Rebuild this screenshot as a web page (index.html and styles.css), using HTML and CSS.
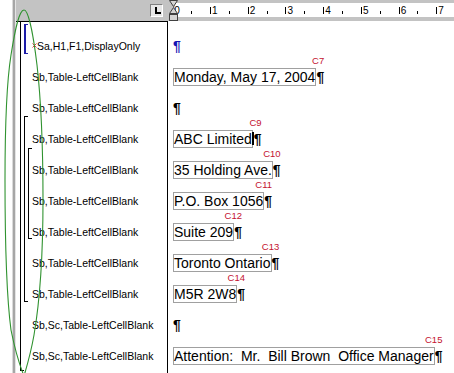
FILE: index.html
```html
<!DOCTYPE html>
<html lang="en">
<head>
    <meta charset="UTF-8">
    <title>Style Area</title>
    <link rel="stylesheet" href="styles.css">
</head>
<body>
<div class="window">
    <div class="gutter"></div>
    <div class="split-bar"></div>

    <div class="main">
        <!-- Ruler -->
        <div class="ruler">
            <div class="tab-btn"><span class="tab-l"></span></div>
            <svg class="indent-marker" viewBox="0 0 9 21">
                <path d="M0.5,0.5 H8.5 L4.5,6.5 Z" fill="#d4d4d4" stroke="#404040"/>
                <path d="M4.5,7.5 L8.5,13.5 H0.5 Z" fill="#d4d4d4" stroke="#404040"/>
                <rect x="0.5" y="14.5" width="8" height="6" fill="#d4d4d4" stroke="#404040"/>
            </svg>
            <div class="scale">
                <div class="inch"><div class="inch-a"><span class="tick"></span><span class="num">0</span></div><div class="inch-b"><span class="half"></span></div></div>
                <div class="inch"><div class="inch-a"><span class="tick"></span><span class="num">1</span></div><div class="inch-b"><span class="half"></span></div></div>
                <div class="inch"><div class="inch-a"><span class="tick"></span><span class="num">2</span></div><div class="inch-b"><span class="half"></span></div></div>
                <div class="inch"><div class="inch-a"><span class="tick"></span><span class="num">3</span></div><div class="inch-b"><span class="half"></span></div></div>
                <div class="inch"><div class="inch-a"><span class="tick"></span><span class="num">4</span></div><div class="inch-b"><span class="half"></span></div></div>
                <div class="inch"><div class="inch-a"><span class="tick"></span><span class="num">5</span></div><div class="inch-b"><span class="half"></span></div></div>
                <div class="inch"><div class="inch-a"><span class="tick"></span><span class="num">6</span></div><div class="inch-b"><span class="half"></span></div></div>
                <div class="inch"><div class="inch-a"><span class="tick"></span><span class="num">7</span></div><div class="inch-b"><span class="half"></span></div></div>
            </div>
        </div>

        <div class="content">
            <!-- Style names -->
            <div class="style-area">
                <div class="style-row">
                    <svg class="style-mark" viewBox="0 0 5 5"><path d="M0.5,0.5 L4.5,4.5 M4.5,0.5 L0.5,4.5" stroke="#e04040" stroke-width="1"/></svg>Sa,H1,F1,DisplayOnly
                </div>
                <div class="style-row">Sb,Table-LeftCellBlank</div>
                <div class="style-row">Sb,Table-LeftCellBlank</div>
                <div class="style-row">Sb,Table-LeftCellBlank</div>
                <div class="style-row">Sb,Table-LeftCellBlank</div>
                <div class="style-row">Sb,Table-LeftCellBlank</div>
                <div class="style-row">Sb,Table-LeftCellBlank</div>
                <div class="style-row">Sb,Table-LeftCellBlank</div>
                <div class="style-row">Sb,Table-LeftCellBlank</div>
                <div class="style-row">Sb,Sc,Table-LeftCellBlank</div>
                <div class="style-row">Sb,Sc,Table-LeftCellBlank</div>
            </div>

            <!-- Document text -->
            <div class="doc">
                <div class="para"><span class="pil pil-blue">¶</span></div>
                <div class="para"><span class="field"><span class="box">Monday, May 17, 2004</span><span class="pil">¶</span><span class="tag">C7</span></span></div>
                <div class="para"><span class="pil">¶</span></div>
                <div class="para"><span class="field"><span class="box">ABC Limited</span><span class="caret"></span><span class="pil">¶</span><span class="tag">C9</span></span></div>
                <div class="para"><span class="field"><span class="box">35 Holding Ave.</span><span class="pil">¶</span><span class="tag">C10</span></span></div>
                <div class="para"><span class="field"><span class="box">P.O. Box 1056</span><span class="pil">¶</span><span class="tag">C11</span></span></div>
                <div class="para"><span class="field"><span class="box">Suite 209</span><span class="pil">¶</span><span class="tag">C12</span></span></div>
                <div class="para"><span class="field"><span class="box">Toronto Ontario</span><span class="pil">¶</span><span class="tag">C13</span></span></div>
                <div class="para"><span class="field"><span class="box">M5R 2W8</span><span class="pil">¶</span><span class="tag">C14</span></span></div>
                <div class="para"><span class="pil">¶</span></div>
                <div class="para"><span class="field"><span class="box">Attention:&nbsp; Mr.&nbsp; Bill Brown&nbsp; Office Manager</span><span class="pil">¶</span><span class="tag">C15</span></span></div>
            </div>
        </div>
    </div>

    <!-- Nesting brackets and the hand-drawn green circle -->
    <svg class="annot" viewBox="0 0 50 373">
        <g shape-rendering="crispEdges">
            <path d="M24,21.5 H20.5 V370.5 H24" fill="none" stroke="#000"/>
            <rect x="24" y="24" width="2" height="30" fill="#1c1ca8"/>
            <rect x="24" y="24" width="4" height="1" fill="#1c1ca8"/>
            <rect x="24" y="53" width="4" height="1" fill="#1c1ca8"/>
            <path d="M28,116.5 H24.5 V301.5 H28" fill="none" stroke="#000"/>
            <path d="M32,148.5 H28.5 V238.5 H32" fill="none" stroke="#000"/>
        </g>
        <path d="M24,10 C29,10 34,40 37,65 C41,100 43,150 43,200 C43,260 40,300 34,335 C31,352 27,366 24,376 C20,366 15,350 11,330 C7,300 5,250 5,180 C5,120 7,80 11,55 C15,30 19,10 24,10 Z"
              fill="none" stroke="#2f922f" stroke-width="1.1"/>
    </svg>
</div>
</body>
</html>
```

FILE: styles.css
```css
* {
    box-sizing: border-box;
}

body {
    margin: 0;
    font-family: "Liberation Sans", Arial, sans-serif;
    background: #fff;
}

.window {
    position: relative;
    width: 454px;
    height: 373px;
    display: flex;
    overflow: hidden;
    background: #fff;
}

.gutter {
    width: 12px;
    flex: none;
}

.split-bar {
    width: 4px;
    flex: none;
    background: linear-gradient(to right, #dadada 0, #dadada 1px, #a6a6a6 1px, #a6a6a6 3px, #e4e4e4 3px);
}

.main {
    flex: 1;
    min-width: 0;
    display: flex;
    flex-direction: column;
}

/* Ruler */
.ruler {
    height: 21px;
    flex: none;
    position: relative;
    display: flex;
    align-items: flex-start;
    background: #c3c3c3;
}

.tab-btn {
    position: relative;
    width: 13px;
    height: 13px;
    margin: 4px 0 0 134px;
    border: 1px solid;
    border-color: #808080 #fff #fff #808080;
    background: #e8e8e8;
}

.tab-l {
    position: absolute;
    left: 4px;
    top: 2px;
    width: 6px;
    height: 7px;
    border-left: 2px solid #000;
    border-bottom: 2px solid #000;
}

.indent-marker {
    position: absolute;
    left: 153px;
    top: 0;
    width: 9px;
    height: 21px;
    z-index: 1;
}

.scale {
    flex: 1;
    height: 14px;
    margin: 3px 0 0 12px;
    display: flex;
    overflow: hidden;
    background: #fff;
}

.inch {
    flex: none;
    width: 37.72px;
    display: flex;
}

.inch:first-child {
    margin-left: -2.7px;
}

.inch-a, .inch-b {
    width: 50%;
    display: flex;
    align-items: flex-start;
}

.tick {
    width: 1px;
    height: 7px;
    margin-top: 4px;
    background: #000;
}

.num {
    font-size: 10px;
    line-height: 10px;
    margin: 3px 0 0 1px;
    color: #000;
}

.half {
    width: 1px;
    height: 3px;
    margin-top: 8px;
    background: #000;
}

/* Content */
.content {
    flex: 1;
    min-height: 0;
    display: flex;
}

.style-area {
    width: 152px;
    flex: none;
    padding-top: 8px;
    border-top: 1px solid #000;
    border-right: 1px solid #000;
}

.style-row {
    height: 31px;
    display: flex;
    align-items: center;
    padding-left: 16px;
    font-size: 10.5px;
    color: #000;
    white-space: nowrap;
}

.style-mark {
    width: 5px;
    height: 5px;
    flex: none;
}

.doc {
    flex: 1;
    padding: 9px 0 0 5px;
}

.para {
    height: 31px;
    display: flex;
    align-items: center;
    font-size: 14px;
    line-height: 16px;
    color: #000;
    white-space: nowrap;
}

.pil {
    font-weight: bold;
    color: #000;
}

.pil-blue {
    color: #1414b4;
}

.field {
    position: relative;
    display: flex;
    align-items: center;
}

.box {
    border: 1px solid #a0a0a0;
}

.caret {
    width: 2px;
    height: 13px;
    margin-left: -1px;
    background: #000;
}

.tag {
    position: absolute;
    right: 0;
    top: -12px;
    font-size: 9.5px;
    line-height: 10px;
    color: #c41230;
}

.annot {
    position: absolute;
    left: 0;
    top: 0;
    width: 50px;
    height: 373px;
    pointer-events: none;
}
```
